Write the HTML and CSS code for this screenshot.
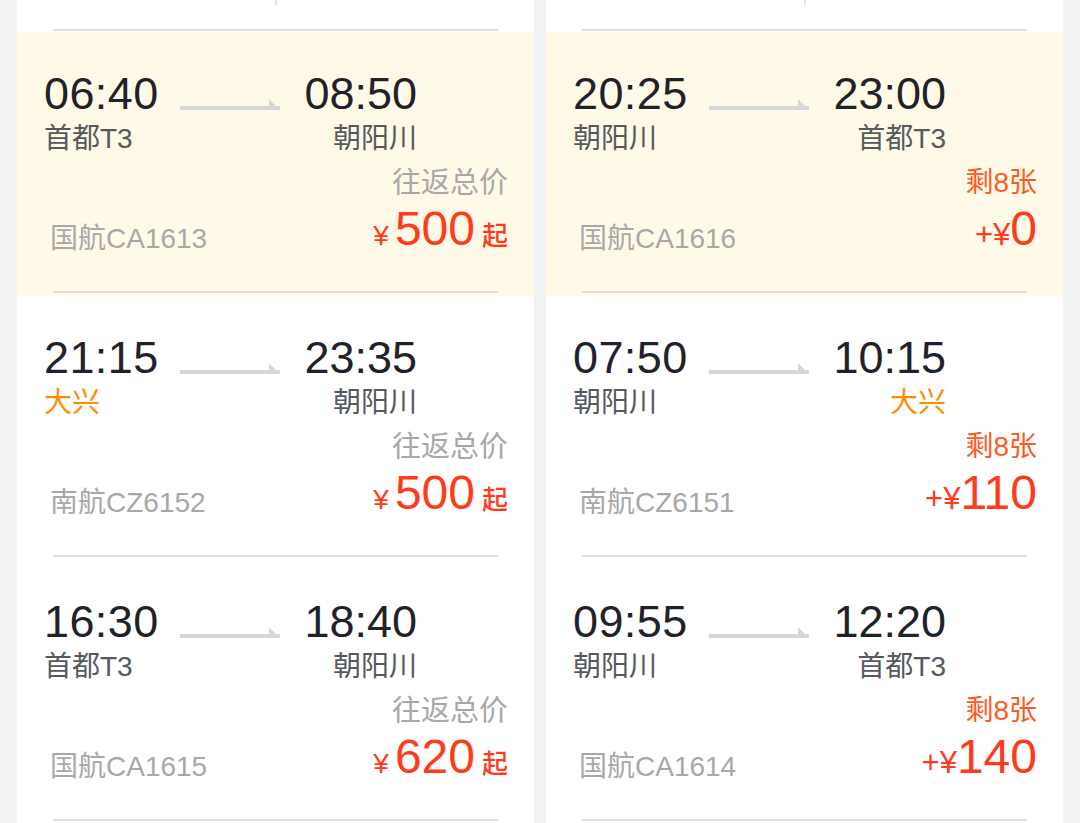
FILE: index.html
```html
<!DOCTYPE html>
<html lang="zh-CN">
<head>
  <meta charset="UTF-8" />
  <title>往返航班</title>
  <link rel="stylesheet" href="styles.css">
</head>
<body>

  <!-- 去程 -->
  <div class="col">
    <div class="tail">
      <div class="stub"></div>
      <div class="rule"></div>
    </div>

    <div class="row hl">
      <div class="times">
        <div class="dep">
          <div class="time">06:40</div>
          <div class="place">首都T3</div>
        </div>
        <svg class="arrow" width="100" height="11" viewBox="0 0 100 11"><rect x="0" y="7" width="100" height="4"/><polygon points="89,0 100,11 89,11"/></svg>
        <div class="arr">
          <div class="time">08:50</div>
          <div class="place">朝阳川</div>
        </div>
      </div>
      <div class="fare">
        <div class="flight">国航CA1613</div>
        <div class="price-box">
          <div class="label">往返总价</div>
          <div class="price"><span class="cur">¥</span>500<span class="unit">起</span></div>
        </div>
      </div>
      <div class="rule"></div>
    </div>

    <div class="row">
      <div class="times">
        <div class="dep">
          <div class="time">21:15</div>
          <div class="place new">大兴</div>
        </div>
        <svg class="arrow" width="100" height="11" viewBox="0 0 100 11"><rect x="0" y="7" width="100" height="4"/><polygon points="89,0 100,11 89,11"/></svg>
        <div class="arr">
          <div class="time">23:35</div>
          <div class="place">朝阳川</div>
        </div>
      </div>
      <div class="fare">
        <div class="flight">南航CZ6152</div>
        <div class="price-box">
          <div class="label">往返总价</div>
          <div class="price"><span class="cur">¥</span>500<span class="unit">起</span></div>
        </div>
      </div>
      <div class="rule"></div>
    </div>

    <div class="row">
      <div class="times">
        <div class="dep">
          <div class="time">16:30</div>
          <div class="place">首都T3</div>
        </div>
        <svg class="arrow" width="100" height="11" viewBox="0 0 100 11"><rect x="0" y="7" width="100" height="4"/><polygon points="89,0 100,11 89,11"/></svg>
        <div class="arr">
          <div class="time">18:40</div>
          <div class="place">朝阳川</div>
        </div>
      </div>
      <div class="fare">
        <div class="flight">国航CA1615</div>
        <div class="price-box">
          <div class="label">往返总价</div>
          <div class="price"><span class="cur">¥</span>620<span class="unit">起</span></div>
        </div>
      </div>
      <div class="rule"></div>
    </div>
  </div>

  <!-- 返程 -->
  <div class="col">
    <div class="tail">
      <div class="stub"></div>
      <div class="rule"></div>
    </div>

    <div class="row hl">
      <div class="times">
        <div class="dep">
          <div class="time">20:25</div>
          <div class="place">朝阳川</div>
        </div>
        <svg class="arrow" width="100" height="11" viewBox="0 0 100 11"><rect x="0" y="7" width="100" height="4"/><polygon points="89,0 100,11 89,11"/></svg>
        <div class="arr">
          <div class="time">23:00</div>
          <div class="place">首都T3</div>
        </div>
      </div>
      <div class="fare">
        <div class="flight">国航CA1616</div>
        <div class="price-box">
          <div class="label left">剩8张</div>
          <div class="price"><span class="plus">+¥</span>0</div>
        </div>
      </div>
      <div class="rule"></div>
    </div>

    <div class="row">
      <div class="times">
        <div class="dep">
          <div class="time">07:50</div>
          <div class="place">朝阳川</div>
        </div>
        <svg class="arrow" width="100" height="11" viewBox="0 0 100 11"><rect x="0" y="7" width="100" height="4"/><polygon points="89,0 100,11 89,11"/></svg>
        <div class="arr">
          <div class="time">10:15</div>
          <div class="place new">大兴</div>
        </div>
      </div>
      <div class="fare">
        <div class="flight">南航CZ6151</div>
        <div class="price-box">
          <div class="label left">剩8张</div>
          <div class="price"><span class="plus">+¥</span>110</div>
        </div>
      </div>
      <div class="rule"></div>
    </div>

    <div class="row">
      <div class="times">
        <div class="dep">
          <div class="time">09:55</div>
          <div class="place">朝阳川</div>
        </div>
        <svg class="arrow" width="100" height="11" viewBox="0 0 100 11"><rect x="0" y="7" width="100" height="4"/><polygon points="89,0 100,11 89,11"/></svg>
        <div class="arr">
          <div class="time">12:20</div>
          <div class="place">首都T3</div>
        </div>
      </div>
      <div class="fare">
        <div class="flight">国航CA1614</div>
        <div class="price-box">
          <div class="label left">剩8张</div>
          <div class="price"><span class="plus">+¥</span>140</div>
        </div>
      </div>
      <div class="rule"></div>
    </div>
  </div>

</body>
</html>
```

FILE: styles.css
```css
html, body {
  height: 823px;
  overflow: hidden;
}

body {
  margin: 0;
  padding: 0 17px;
  background: #f2f3f5;
  font-family: 'Liberation Sans', 'Noto Sans CJK SC', sans-serif;
  display: grid;
  grid-template-columns: 1fr 1fr;
  gap: 12px;
}

.col {
  background: #fff;
}

.tail {
  height: 32px;
  display: flex;
  flex-direction: column;
}

.stub {
  width: 2px;
  height: 5px;
  margin: 0 auto;
  background: #e6e6e6;
}

.rule {
  height: 2px;
  margin: auto 36px 1px;
  background: #dedede;
}

.row {
  height: 264px;
  box-sizing: border-box;
  padding-top: 40px;
  display: flex;
  flex-direction: column;
}

.row .rule {
  margin-bottom: 3px;
}

.row.hl {
  background: #fffae8;
}

.times {
  display: grid;
  grid-template-columns: 136px 100px 137px;
  padding-left: 27px;
}

.arr {
  text-align: right;
}

.time {
  font-size: 45px;
  line-height: 44px;
  letter-spacing: 0.4px;
  color: #1f2329;
}

.arr .time {
  letter-spacing: 0;
  padding-left: 2px;
}

.place {
  font-size: 28px;
  line-height: 40px;
  margin-top: 3px;
  color: #56595e;
}

.place.new {
  color: #ff8c00;
}

.arrow {
  align-self: start;
  margin-top: 27px;
  fill: #d6d7dd;
}

.fare {
  display: flex;
  justify-content: space-between;
  align-items: flex-end;
  margin-top: 6px;
  padding: 0 26px 0 33px;
}

.flight {
  font-size: 28px;
  line-height: 36px;
  margin-bottom: -4px;
  color: #a8a8a8;
}

.price-box {
  text-align: right;
}

.label {
  font-size: 29px;
  line-height: 36px;
  color: #a8a8a8;
}

.label.left {
  font-size: 28px;
  color: #ff5a1f;
}

.price {
  margin-top: 4px;
  font-size: 48px;
  line-height: 48px;
  color: #ff3b1d;
}

.cur {
  font-size: 28px;
  line-height: 1;
  margin-right: 6px;
}

.unit {
  font-size: 26px;
  font-weight: 500;
  line-height: 1;
  margin-left: 7px;
}

.plus {
  font-size: 31px;
  line-height: 1;
}
```
